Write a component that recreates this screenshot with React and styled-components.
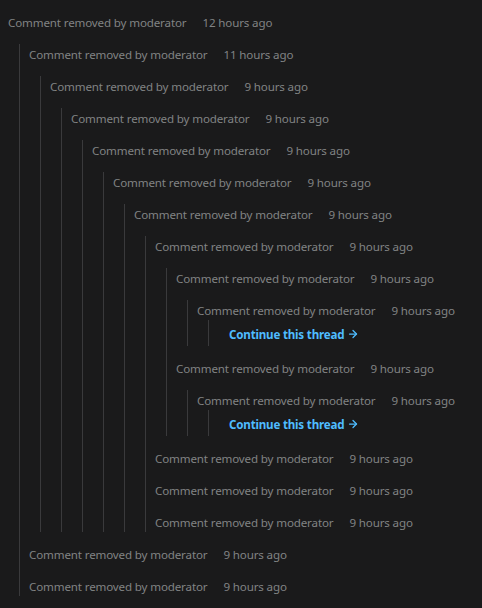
import React from 'react'
import styled, { createGlobalStyle } from 'styled-components'
import { ArrowRight } from 'lucide-react'

const GlobalStyle = createGlobalStyle`
    html, body {
        background: #1a1a1b;
    }
    body {
        margin: 0;
        padding: 0 8px 8px;
        font-family: "Noto Sans", "Liberation Sans", sans-serif;
    }
`

const StyledComment = styled.div`
    margin-top: 12px;
`

const StyledHeader = styled.div`
    display: flex;
    align-items: center;
    gap: 16px;
    height: 20px;
    font-size: 11.6px;
    letter-spacing: -0.15px;
    color: #818384;
    white-space: nowrap;
`

const StyledTime = styled.span`
    color: #818384;
`

const StyledChildren = styled.div`
    margin-left: 11px;
    padding-left: 9px;
    border-left: 1px solid #3a3a3c;
`

const StyledContinue = styled.div`
    display: flex;
    align-items: center;
    gap: 3px;
    height: 18px;
    padding: 5px 0 3px 20px;
    margin-left: 11px;
    border-left: 1px solid #3a3a3c;
    font-size: 11.6px;
    letter-spacing: -0.2px;
    font-weight: 700;
    color: #4fbcff;
    white-space: nowrap;
`

const c = (time, replies = [], more = false) => ({ time, replies, more })

const thread = c('12 hours ago', [
    c('11 hours ago', [
        c('9 hours ago', [
            c('9 hours ago', [
                c('9 hours ago', [
                    c('9 hours ago', [
                        c('9 hours ago', [
                            c('9 hours ago', [
                                c('9 hours ago', [c('9 hours ago', [], true)]),
                                c('9 hours ago', [c('9 hours ago', [], true)]),
                            ]),
                            c('9 hours ago'),
                            c('9 hours ago'),
                            c('9 hours ago'),
                        ]),
                    ]),
                ]),
            ]),
        ]),
    ]),
    c('9 hours ago'),
    c('9 hours ago'),
])

const Comment = ({ comment }) => (
    <StyledComment>
        <StyledHeader>
            <span>Comment removed by moderator</span>
            <StyledTime>{comment.time}</StyledTime>
        </StyledHeader>
        {comment.more && (
            <StyledContinue>
                Continue this thread <ArrowRight size={12} strokeWidth={2.5} />
            </StyledContinue>
        )}
        {comment.replies.length > 0 && (
            <StyledChildren>
                {comment.replies.map((r, i) => (
                    <Comment key={i} comment={r} />
                ))}
            </StyledChildren>
        )}
    </StyledComment>
)

const App = () => (
    <>
        <GlobalStyle />
        <Comment comment={thread} />
    </>
)

export default App
